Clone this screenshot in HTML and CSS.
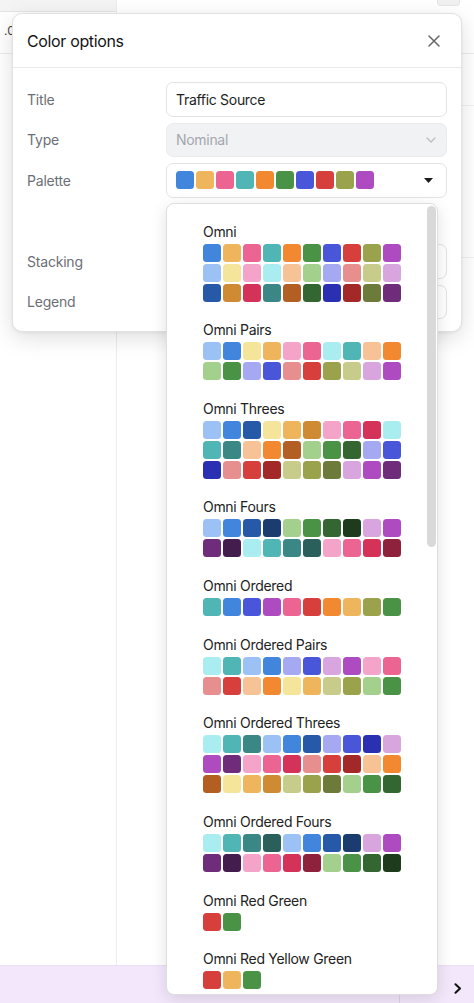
FILE: index.html
```html
<!DOCTYPE html>
<html lang="en">
<head>
<meta charset="utf-8">
<title>Color options</title>
<link rel="stylesheet" href="styles.css">
</head>
<body>
<div class="app">
  <div class="workspace">
    <aside class="side">
      <div class="side-top"></div>
      <div class="side-crumb"><span class="crumb">.0</span></div>
      <div class="side-rest"></div>
    </aside>
    <main class="main">
      <div class="main-top"><div class="tab"></div></div>
      <div class="main-row"></div>
      <div class="main-row"></div>
      <div class="main-rest"></div>
    </main>
  </div>
  <footer class="bottom">
    <div class="bottom-left"></div>
    <div class="bottom-right">
      <svg class="chev-right" width="8" height="11" viewBox="0 0 8 11"><path d="M1.5 1.2 L6 5.5 L1.5 9.8" fill="none" stroke="#111" stroke-width="2" stroke-linecap="round" stroke-linejoin="round"/></svg>
    </div>
  </footer>

  <section class="modal">
    <header class="modal-head">
      <h2 class="modal-title">Color options</h2>
      <button class="close" aria-label="Close">
        <svg width="12" height="12" viewBox="0 0 12 12"><path d="M1 1 L11 11 M11 1 L1 11" stroke="#666" stroke-width="1.5" stroke-linecap="round"/></svg>
      </button>
    </header>
    <div class="modal-body">
      <div class="form">
        <label class="lbl">Title</label>
        <div class="field"><span class="val">Traffic Source</span></div>

        <label class="lbl">Type</label>
        <div class="field disabled"><span class="val">Nominal</span>
          <svg class="chev-down" width="10" height="6" viewBox="0 0 10 6"><path d="M1 1 L5 5 L9 1" fill="none" stroke="#b9bcc2" stroke-width="1.2" stroke-linecap="round" stroke-linejoin="round"/></svg>
        </div>

        <label class="lbl">Palette</label>
        <div class="field palette-field">
          <div class="swatches-inline">
            <i class="sw blue"></i><i class="sw yellow"></i><i class="sw pink"></i><i class="sw teal"></i><i class="sw orange"></i><i class="sw green"></i><i class="sw indigo"></i><i class="sw red"></i><i class="sw olive"></i><i class="sw purple"></i>
          </div>
          <svg class="caret" width="9" height="5" viewBox="0 0 9 5"><path d="M0 0 H9 L4.5 5 Z" fill="#1c1c1c"/></svg>

          <div class="dropdown">
            <div class="dd-list">
              <div class="opt">
                <div class="opt-name">Omni</div>
                <div class="grid">
                  <i class="sw blue"></i><i class="sw yellow"></i><i class="sw pink"></i><i class="sw teal"></i><i class="sw orange"></i><i class="sw green"></i><i class="sw indigo"></i><i class="sw red"></i><i class="sw olive"></i><i class="sw purple"></i>
                  <i class="sw lblue"></i><i class="sw lyellow"></i><i class="sw lpink"></i><i class="sw lteal"></i><i class="sw lorange"></i><i class="sw lgreen"></i><i class="sw lindigo"></i><i class="sw lred"></i><i class="sw lolive"></i><i class="sw lpurple"></i>
                  <i class="sw dblue"></i><i class="sw dyellow"></i><i class="sw dpink"></i><i class="sw dteal"></i><i class="sw dorange"></i><i class="sw dgreen"></i><i class="sw dindigo"></i><i class="sw dred"></i><i class="sw dolive"></i><i class="sw dpurple"></i>
                </div>
              </div>
              <div class="opt">
                <div class="opt-name">Omni Pairs</div>
                <div class="grid">
                  <i class="sw lblue"></i><i class="sw blue"></i><i class="sw lyellow"></i><i class="sw yellow"></i><i class="sw lpink"></i><i class="sw pink"></i><i class="sw lteal"></i><i class="sw teal"></i><i class="sw lorange"></i><i class="sw orange"></i>
                  <i class="sw lgreen"></i><i class="sw green"></i><i class="sw lindigo"></i><i class="sw indigo"></i><i class="sw lred"></i><i class="sw red"></i><i class="sw olive"></i><i class="sw lolive"></i><i class="sw lpurple"></i><i class="sw purple"></i>
                </div>
              </div>
              <div class="opt">
                <div class="opt-name">Omni Threes</div>
                <div class="grid">
                  <i class="sw lblue"></i><i class="sw blue"></i><i class="sw dblue"></i><i class="sw lyellow"></i><i class="sw yellow"></i><i class="sw dyellow"></i><i class="sw lpink"></i><i class="sw pink"></i><i class="sw dpink"></i><i class="sw lteal"></i>
                  <i class="sw teal"></i><i class="sw dteal"></i><i class="sw lorange"></i><i class="sw orange"></i><i class="sw dorange"></i><i class="sw lgreen"></i><i class="sw green"></i><i class="sw dgreen"></i><i class="sw lindigo"></i><i class="sw indigo"></i>
                  <i class="sw dindigo"></i><i class="sw lred"></i><i class="sw red"></i><i class="sw dred"></i><i class="sw lolive"></i><i class="sw olive"></i><i class="sw dolive"></i><i class="sw lpurple"></i><i class="sw purple"></i><i class="sw dpurple"></i>
                </div>
              </div>
              <div class="opt">
                <div class="opt-name">Omni Fours</div>
                <div class="grid">
                  <i class="sw lblue"></i><i class="sw blue"></i><i class="sw dblue"></i><i class="sw ddblue"></i><i class="sw lgreen"></i><i class="sw green"></i><i class="sw dgreen"></i><i class="sw ddgreen"></i><i class="sw lpurple"></i><i class="sw purple"></i>
                  <i class="sw dpurple"></i><i class="sw ddpurple"></i><i class="sw lteal"></i><i class="sw teal"></i><i class="sw dteal"></i><i class="sw ddteal"></i><i class="sw lpink"></i><i class="sw pink"></i><i class="sw dpink"></i><i class="sw ddpink"></i>
                </div>
              </div>
              <div class="opt">
                <div class="opt-name">Omni Ordered</div>
                <div class="grid">
                  <i class="sw teal"></i><i class="sw blue"></i><i class="sw indigo"></i><i class="sw purple"></i><i class="sw pink"></i><i class="sw red"></i><i class="sw orange"></i><i class="sw yellow"></i><i class="sw olive"></i><i class="sw green"></i>
                </div>
              </div>
              <div class="opt">
                <div class="opt-name">Omni Ordered Pairs</div>
                <div class="grid">
                  <i class="sw lteal"></i><i class="sw teal"></i><i class="sw lblue"></i><i class="sw blue"></i><i class="sw lindigo"></i><i class="sw indigo"></i><i class="sw lpurple"></i><i class="sw purple"></i><i class="sw lpink"></i><i class="sw pink"></i>
                  <i class="sw lred"></i><i class="sw red"></i><i class="sw lorange"></i><i class="sw orange"></i><i class="sw lyellow"></i><i class="sw yellow"></i><i class="sw lolive"></i><i class="sw olive"></i><i class="sw lgreen"></i><i class="sw green"></i>
                </div>
              </div>
              <div class="opt">
                <div class="opt-name">Omni Ordered Threes</div>
                <div class="grid">
                  <i class="sw lteal"></i><i class="sw teal"></i><i class="sw dteal"></i><i class="sw lblue"></i><i class="sw blue"></i><i class="sw dblue"></i><i class="sw lindigo"></i><i class="sw indigo"></i><i class="sw dindigo"></i><i class="sw lpurple"></i>
                  <i class="sw purple"></i><i class="sw dpurple"></i><i class="sw lpink"></i><i class="sw pink"></i><i class="sw dpink"></i><i class="sw lred"></i><i class="sw red"></i><i class="sw dred"></i><i class="sw lorange"></i><i class="sw orange"></i>
                  <i class="sw dorange"></i><i class="sw lyellow"></i><i class="sw yellow"></i><i class="sw dyellow"></i><i class="sw lolive"></i><i class="sw olive"></i><i class="sw dolive"></i><i class="sw lgreen"></i><i class="sw green"></i><i class="sw dgreen"></i>
                </div>
              </div>
              <div class="opt">
                <div class="opt-name">Omni Ordered Fours</div>
                <div class="grid">
                  <i class="sw lteal"></i><i class="sw teal"></i><i class="sw dteal"></i><i class="sw ddteal"></i><i class="sw lblue"></i><i class="sw blue"></i><i class="sw dblue"></i><i class="sw ddblue"></i><i class="sw lpurple"></i><i class="sw purple"></i>
                  <i class="sw dpurple"></i><i class="sw ddpurple"></i><i class="sw lpink"></i><i class="sw pink"></i><i class="sw dpink"></i><i class="sw ddpink"></i><i class="sw lgreen"></i><i class="sw green"></i><i class="sw dgreen"></i><i class="sw ddgreen"></i>
                </div>
              </div>
              <div class="opt">
                <div class="opt-name">Omni Red Green</div>
                <div class="grid">
                  <i class="sw red"></i><i class="sw green"></i>
                </div>
              </div>
              <div class="opt">
                <div class="opt-name">Omni Red Yellow Green</div>
                <div class="grid">
                  <i class="sw red"></i><i class="sw yellow"></i><i class="sw green"></i>
                </div>
              </div>
            </div>
            <div class="thumb"></div>
          </div>
        </div>

        <span class="lbl"></span>
        <div class="spacer"></div>

        <label class="lbl">Stacking</label>
        <div class="field"></div>

        <label class="lbl">Legend</label>
        <div class="field"></div>
      </div>
    </div>
  </section>
</div>
</body>
</html>
```
FILE: styles.css
```css
* { box-sizing: border-box; }
html, body { margin: 0; padding: 0; }
body {
  width: 474px;
  height: 1003px;
  overflow: hidden;
  background: #fff;
  font-family: Inter, "Noto Sans", "Liberation Sans", sans-serif;
  color: #1f1f1f;
}
.app {
  position: relative;
  height: 1003px;
  display: flex;
  flex-direction: column;
}

/* background page */
.workspace { flex: 1; display: flex; min-height: 0; }
.side {
  width: 117px;
  border-right: 1px solid #ededed;
  display: flex;
  flex-direction: column;
}
.side-top { height: 12px; background: #f4f4f5; border-bottom: 1px solid #e4e4e6; }
.side-crumb {
  height: 42px;
  border-bottom: 1px solid #ececec;
  display: flex;
  align-items: center;
}
.crumb { font-size: 12px; color: #444; margin-left: 4px; margin-top: -4px; }
.side-rest { flex: 1; }
.main { flex: 1; display: flex; flex-direction: column; }
.main-top {
  height: 54px;
  border-bottom: 1px solid #ececec;
  display: flex;
  justify-content: flex-end;
  padding-right: 14px;
}
.tab {
  width: 23px;
  height: 6px;
  background: #f1f1f2;
  border: 1px solid #e6e6e6;
  border-top: 0;
  border-radius: 0 0 4px 4px;
}
.main-row { height: 52px; border-bottom: 1px solid #f0f0f0; }
.main-row + .main-row { height: 152px; }
.main-rest { flex: 1; }

.bottom {
  height: 38px;
  background: #f3e7fc;
  border-top: 1px solid #ebdff5;
  display: flex;
}
.bottom-left { width: 400px; border-right: 1px solid #ddd3e6; }
.bottom-right {
  flex: 1;
  display: flex;
  align-items: center;
  justify-content: flex-end;
  padding-right: 12px;
  padding-top: 8px;
}

/* modal */
.modal {
  position: absolute;
  left: 12px;
  top: 13px;
  width: 450px;
  background: #fff;
  border: 1px solid #e2e2e4;
  border-radius: 10px;
  box-shadow: 0 6px 22px rgba(0, 0, 0, 0.13), 0 1px 3px rgba(0, 0, 0, 0.06);
  z-index: 10;
}
.modal-head {
  height: 54px;
  display: flex;
  align-items: center;
  justify-content: space-between;
  padding: 0 13px 0 14px;
  border-bottom: 1px solid #e9e9eb;
}
.modal-title {
  margin: 0;
  font-size: 16px;
  font-weight: 400;
  color: #141414;
  letter-spacing: -0.35px;
}
.close {
  width: 28px;
  height: 28px;
  border: 0;
  background: none;
  padding: 0;
  display: flex;
  align-items: center;
  justify-content: center;
}
.modal-body { padding: 14px 14px 12px; }
.form {
  display: grid;
  grid-template-columns: 139px 1fr;
  grid-auto-rows: 34.5px;
  row-gap: 6px;
}
.lbl {
  display: flex;
  align-items: center;
  font-size: 14px;
  color: #6c6f76;
  letter-spacing: -0.2px;
}
.field {
  position: relative;
  border: 1px solid #e1e3e7;
  border-radius: 7px;
  background: #fff;
  display: flex;
  align-items: center;
  justify-content: space-between;
  padding: 0 10px 0 9px;
}
.val { font-size: 14px; color: #1e1e1e; letter-spacing: -0.3px; }
.field.disabled { background: #f1f2f4; border-color: #eaebee; }
.field.disabled .val { color: #a4a7ae; }
.palette-field { padding-right: 13px; z-index: 3; }
.caret { margin-top: 1px; }

.swatches-inline { display: flex; gap: 2px; }
.sw {
  display: block;
  width: 18px;
  height: 18px;
  border-radius: 3.5px;
}

.dropdown {
  position: absolute;
  left: -1px;
  top: calc(100% + 6px);
  width: 272px;
  height: 792px;
  background: #fff;
  border: 1px solid #dedede;
  border-radius: 8px;
  box-shadow: 0 4px 16px rgba(0, 0, 0, 0.12);
  overflow: hidden;
}
.dd-list { padding: 18px 0 0 36px; }
.opt { margin-bottom: 18.67px; }
.opt-name {
  font-size: 14px;
  line-height: 20px;
  color: #222;
  margin-bottom: 2px;
  letter-spacing: -0.3px;
}
.grid {
  display: grid;
  grid-template-columns: repeat(10, 18px);
  grid-auto-rows: 18px;
  gap: 2px;
}
.thumb {
  position: absolute;
  right: 1px;
  top: 2px;
  width: 9px;
  height: 341px;
  border-radius: 5px;
  background: #d9d9d9;
}

/* palette colours */
.lblue { background: #9cc2f5; }
.blue { background: #4285dd; }
.dblue { background: #2659a8; }
.ddblue { background: #1b3c6e; }
.lyellow { background: #f5e59a; }
.yellow { background: #eeb55c; }
.dyellow { background: #cf8b33; }
.lpink { background: #f4a3c9; }
.pink { background: #ec6592; }
.dpink { background: #d43258; }
.ddpink { background: #8e213b; }
.lteal { background: #aaedf1; }
.teal { background: #4fb5b5; }
.dteal { background: #3a8786; }
.ddteal { background: #2a5f5b; }
.lorange { background: #f7c396; }
.orange { background: #f2882f; }
.dorange { background: #b35f23; }
.lgreen { background: #a3d08d; }
.green { background: #4a9246; }
.dgreen { background: #346632; }
.ddgreen { background: #1f3b1d; }
.lindigo { background: #a5a9f1; }
.indigo { background: #4a56da; }
.dindigo { background: #2a30b1; }
.lred { background: #e78e8e; }
.red { background: #d63f3c; }
.dred { background: #a32828; }
.lolive { background: #c8cc8b; }
.olive { background: #9aa24c; }
.dolive { background: #6c7a3a; }
.lpurple { background: #d9a5de; }
.purple { background: #ae4bc1; }
.dpurple { background: #6e2c7a; }
.ddpurple { background: #431d4e; }
```
